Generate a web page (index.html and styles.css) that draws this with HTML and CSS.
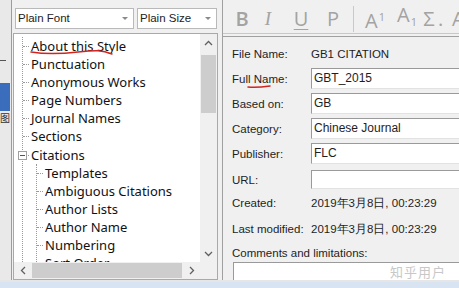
FILE: index.html
```html
<!DOCTYPE html>
<html lang="en">
<head>
  <meta charset="utf-8">
  <title>Style Info</title>
  <link rel="stylesheet" href="styles.css">
</head>
<body>
  <div class="screen">
    <div class="edge">
      <span class="edge-dash"></span>
      <span class="edge-sel"></span>
      <span class="edge-char">图</span>
    </div>

    <div class="left">
      <div class="combos">
        <div class="combo combo-font">Plain Font<span class="caret"></span></div>
        <div class="combo combo-size">Plain Size<span class="caret"></span></div>
      </div>

      <div class="tree">
        <div class="tree-body">
          <ul class="branch">
            <li><span class="node">About this Style<svg class="mark mark-about" width="84" height="7" viewBox="0 0 84 7"><path d="M1 3 C 14 5, 30 5, 48 3 S 72 1, 82 5" /></svg></span></li>
            <li><span class="node">Punctuation</span></li>
            <li><span class="node">Anonymous Works</span></li>
            <li><span class="node">Page Numbers</span></li>
            <li><span class="node">Journal Names</span></li>
            <li><span class="node">Sections</span></li>
            <li>
              <span class="node"><span class="toggle"></span>Citations</span>
              <ul class="branch sub">
                <li><span class="node">Templates</span></li>
                <li><span class="node">Ambiguous Citations</span></li>
                <li><span class="node">Author Lists</span></li>
                <li><span class="node">Author Name</span></li>
                <li><span class="node">Numbering</span></li>
                <li><span class="node">Sort Order</span></li>
                <li><span class="node">Formatting</span></li>
              </ul>
            </li>
            <li><span class="node">Bibliography</span></li>
          </ul>
        </div>
        <div class="vscroll">
          <span class="arrow"><svg width="9" height="6" viewBox="0 0 9 6"><path d="M1 5 L4.5 1.5 L8 5" /></svg></span>
          <span class="vthumb"></span>
          <span class="fill"></span>
          <span class="arrow"><svg width="9" height="6" viewBox="0 0 9 6"><path d="M1 1 L4.5 4.5 L8 1" /></svg></span>
        </div>
        <div class="hscroll">
          <span class="arrow"><svg width="6" height="9" viewBox="0 0 6 9"><path d="M5 1 L1.5 4.5 L5 8" /></svg></span>
          <span class="hthumb"></span>
          <span class="fill"></span>
          <span class="arrow"><svg width="6" height="9" viewBox="0 0 6 9"><path d="M1 1 L4.5 4.5 L1 8" /></svg></span>
        </div>
        <div class="corner"></div>
      </div>
    </div>

    <div class="right">
      <div class="format-bar">
        <span class="fmt fmt-b">B</span>
        <span class="fmt fmt-i">I</span>
        <span class="fmt fmt-u">U</span>
        <span class="fmt fmt-p">P</span>
        <span class="fmt-sep"></span>
        <span class="fmt fmt-sup">A<small>1</small></span>
        <span class="fmt fmt-sub">A<small>1</small></span>
        <span class="fmt fmt-sum">Σ</span>
        <span class="fmt fmt-dot">.</span>
        <span class="fmt fmt-a">A</span>
      </div>

      <div class="props">
        <div class="fields">
          <span class="label">File Name:</span>
          <span class="value">GB1 CITATION</span>

          <span class="label"><span class="marked">Full Name:<svg class="mark mark-name" width="24" height="5" viewBox="0 0 24 5"><path d="M1 3 Q 9 4 23 2" /></svg></span></span>
          <span class="input">GBT_2015</span>

          <span class="label">Based on:</span>
          <span class="input">GB</span>

          <span class="label">Category:</span>
          <span class="input">Chinese Journal</span>

          <span class="label">Publisher:</span>
          <span class="input">FLC</span>

          <span class="label">URL:</span>
          <span class="input input-url"></span>

          <span class="label">Created:</span>
          <span class="value">2019年3月8日, 00:23:29</span>

          <span class="label">Last modified:</span>
          <span class="value">2019年3月8日, 00:23:29</span>
        </div>
        <div class="comments-label">Comments and limitations:</div>
        <div class="comments"><span class="watermark">知乎用户</span></div>
      </div>
    </div>
  </div>
  <div class="status"></div>
</body>
</html>
```

FILE: styles.css
```css
* {
  box-sizing: border-box;
}

body {
  margin: 0;
  width: 459px;
  height: 288px;
  overflow: hidden;
  background: #f0f0f0;
  font-family: "Liberation Sans", Arial, sans-serif;
  color: #1e1e1e;
}

.screen {
  display: flex;
  height: 280px;
}

/* strip of the window behind */
.edge {
  width: 12px;
  border-right: 1px solid #9c9c9c;
  background: #e9e9e9;
  display: flex;
  flex-direction: column;
  overflow: hidden;
}

.edge-dash {
  margin-top: 60px;
  width: 6px;
  height: 1px;
  background: #555;
}

.edge-sel {
  margin-top: 22px;
  width: 10px;
  height: 28px;
  background: #3b6dbd;
}

.edge-char {
  width: 11px;
  overflow: hidden;
  font: 10px/14px "Noto Sans CJK SC", sans-serif;
  color: #333;
}

/* left column */
.left {
  width: 210px;
  min-height: 0;
  display: flex;
  flex-direction: column;
}

.combos {
  flex: 0 0 33px;
  display: flex;
  gap: 3px;
  padding: 8px 0 0 3px;
}

.combo {
  position: relative;
  height: 21px;
  border: 1px solid #b9b9b9;
  background: #fff;
  font-size: 11.5px;
  line-height: 19px;
  padding-left: 2px;
  color: #222;
}

.combo-font {
  width: 119px;
}

.combo-size {
  width: 80px;
}

.caret {
  position: absolute;
  right: 5px;
  top: 8px;
  border-left: 3px solid transparent;
  border-right: 3px solid transparent;
  border-top: 3px solid #8a8a8a;
}

.tree {
  flex: 1;
  min-height: 0;
  width: 205px;
  margin-left: 1px;
  border: 1px solid #a9a9a9;
  background: #fff;
  display: grid;
  grid-template-columns: minmax(0, 1fr) 17px;
  grid-template-rows: minmax(0, 1fr) 17px;
}

.tree-body {
  min-height: 0;
  overflow: hidden;
  padding: 3px 0 0 8px;
  font-family: "Noto Sans", sans-serif;
  font-size: 13px;
  color: #111;
}

.branch {
  list-style: none;
  margin: 0;
  padding: 0;
  border-left: 1px dotted #9a9a9a;
}

.branch.sub {
  margin-left: 13px;
}

.node {
  position: relative;
  display: block;
  height: 18.1px;
  line-height: 18px;
  padding-left: 8px;
  white-space: nowrap;
}

.node::before {
  content: "";
  position: absolute;
  left: 0;
  top: 9px;
  width: 6px;
  border-top: 1px dotted #9a9a9a;
}

.toggle {
  position: absolute;
  left: -5px;
  top: 5px;
  width: 9px;
  height: 9px;
  border: 1px solid #a0a0a0;
  background: #fff;
  z-index: 1;
}

.toggle::after {
  content: "";
  position: absolute;
  left: 1px;
  top: 3px;
  width: 5px;
  border-top: 1px solid #555;
}

.mark {
  position: absolute;
  overflow: visible;
}

.mark path {
  fill: none;
  stroke: #d3231f;
  stroke-width: 1.5;
  stroke-linecap: round;
}

.mark-about {
  left: 7px;
  top: 12px;
}

.vscroll,
.hscroll {
  display: flex;
  background: #f0f0f0;
}

.vscroll {
  flex-direction: column;
}

.arrow {
  flex: 0 0 17px;
  display: flex;
  align-items: center;
  justify-content: center;
}

.arrow path {
  fill: none;
  stroke: #606060;
  stroke-width: 1.3;
}

.vthumb {
  margin: 4px 1px 0;
  flex: 0 0 58px;
  background: #cdcdcd;
}

.hthumb {
  margin: 1px 0 1px 1px;
  flex: 0 0 150px;
  background: #cdcdcd;
}

.fill {
  flex: 1;
}

.corner {
  background: #f0f0f0;
}

/* right column */
.right {
  flex: 1;
  min-width: 0;
  border-left: 1px solid #a0a0a0;
  display: flex;
  flex-direction: column;
}

.format-bar {
  flex: 0 0 34px;
  border-bottom: 1px solid #c9c9c9;
  display: grid;
  grid-template-columns: 20px 32px 34px 30px 10px 32px 30px 18px 12px 1fr;
  align-items: center;
  padding-left: 9px;
  font-family: "Open Sans", sans-serif;
  font-size: 20px;
  color: #a3a3a3;
  overflow: hidden;
  white-space: nowrap;
}

.fmt {
  text-align: center;
  line-height: 30px;
}

.fmt-b {
  font-weight: 600;
}

.fmt-i {
  font-family: "Liberation Serif", serif;
  font-style: italic;
  font-size: 19px;
}

.fmt-u {
  text-decoration: underline;
  text-underline-offset: 3px;
  text-decoration-thickness: 1px;
}

.fmt small {
  font-size: 11px;
  margin-left: 1px;
}

.fmt-sup small {
  vertical-align: 7px;
}

.fmt-sub small {
  vertical-align: -4px;
}

.fmt-sup,
.fmt-sub {
  text-align: left;
  padding-left: 7px;
}

.fmt-dot,
.fmt-a {
  text-align: left;
}

.fmt-a {
  padding-left: 2px;
}

.fmt-sep {
  width: 1px;
  height: 26px;
  margin-left: 5px;
  background: #c9c9c9;
}

.props {
  flex: 1;
  min-height: 0;
  margin-top: 2px;
  border-top: 1px solid #a0a0a0;
  padding: 4px 0 0 9px;
  overflow: hidden;
}

.fields {
  display: grid;
  grid-template-columns: 79px 170px;
  grid-template-rows: 25px 25px 25px 25px 25px 27px 20px 32px;
  align-items: center;
  font-size: 11.5px;
}

.label,
.value {
  white-space: nowrap;
  line-height: 14px;
}

.marked {
  position: relative;
}

.mark-name {
  left: 15px;
  top: 11px;
}

.input {
  height: 21px;
  border: 1px solid;
  border-color: #9a9a9a #e2e2e2 #e2e2e2 #9a9a9a;
  background: #fff;
  padding-left: 2px;
  line-height: 19px;
  font-size: 12px;
}

.input-url {
  height: 19px;
}

.comments-label {
  font-size: 11.5px;
  line-height: 16px;
}

.comments {
  margin: 1px 0 0 1px;
  width: 240px;
  height: 20px;
  border: 1px solid;
  border-color: #9a9a9a #e2e2e2 #e2e2e2 #9a9a9a;
  background: #fff;
  padding-left: 156px;
  overflow: hidden;
}

.watermark {
  font-family: "Noto Sans CJK SC", sans-serif;
  font-size: 13px;
  line-height: 16px;
  color: #c8c8c8;
  letter-spacing: 1px;
}

.status {
  height: 8px;
  background: linear-gradient(#e6e6e6 0 2px, #d9e4f2 2px);
}
```
